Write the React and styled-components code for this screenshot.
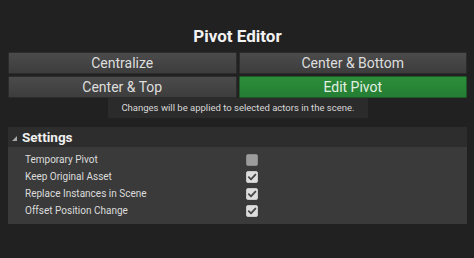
import React from "react";
import styled, { createGlobalStyle } from "styled-components";

const GlobalStyle = createGlobalStyle`
  html, body {
    margin: 0;
    padding: 0;
    background: #212121;
    font-family: Roboto, "Liberation Sans", sans-serif;
  }
`;

const options = [
  { label: "Temporary Pivot", checked: false },
  { label: "Keep Original Asset", checked: true },
  { label: "Replace Instances in Scene", checked: true },
  { label: "Offset Position Change", checked: true },
];

const App = () => {
  return (
    <>
      <GlobalStyle />
      <Page>
        <Title>Pivot Editor</Title>
        <ButtonGrid>
          <Button>Centralize</Button>
          <Button>Center &amp; Bottom</Button>
          <Button>Center &amp; Top</Button>
          <Button active>Edit Pivot</Button>
        </ButtonGrid>
        <Hint>Changes will be applied to selected actors in the scene.</Hint>
        <Panel>
          <PanelHeader>
            <Arrow width="5" height="5" viewBox="0 0 5 5">
              <polygon points="5,0 5,5 0,5" fill="#a8a8a8" />
            </Arrow>
            Settings
          </PanelHeader>
          <PanelBody>
            {options.map((opt) => (
              <Row key={opt.label}>
                <Label>{opt.label}</Label>
                <Check checked={opt.checked}>
                  {opt.checked && (
                    <svg width="10" height="10" viewBox="0 0 10 10">
                      <path
                        d="M1.8 5.2 L4 7.4 L8.4 2.6"
                        fill="none"
                        stroke="#4a4a4a"
                        strokeWidth="1.9"
                        strokeLinecap="round"
                        strokeLinejoin="round"
                      />
                    </svg>
                  )}
                </Check>
              </Row>
            ))}
          </PanelBody>
        </Panel>
      </Page>
    </>
  );
};

const Page = styled.div`
  width: 474px;
  height: 258px;
  padding: 26px 7px 0 8px;
  box-sizing: border-box;
  display: flex;
  flex-direction: column;
`;

const Title = styled.h1`
  margin: 0;
  height: 26px;
  line-height: 20px;
  text-align: center;
  font-size: 17px;
  font-weight: 700;
  color: #f2f2f2;
`;

const ButtonGrid = styled.div`
  display: grid;
  grid-template-columns: 1fr 1fr;
  grid-auto-rows: 22px;
  gap: 2px;
`;

const Button = styled.div`
  display: flex;
  align-items: center;
  justify-content: center;
  box-sizing: border-box;
  border: 1px solid ${(p) => (p.active ? "#1d5a27" : "#2c2c2c")};
  border-radius: 1px;
  background: ${(p) =>
    p.active
      ? "linear-gradient(#2c8e3b, #247d33)"
      : "linear-gradient(#4b4b4b, #3d3d3d)"};
  color: ${(p) => (p.active ? "#e2efe3" : "#dedede")};
  font-size: 14px;
`;

const Hint = styled.div`
  align-self: center;
  width: 260px;
  height: 20px;
  line-height: 20px;
  margin-left: 1px;
  background: #2b2b2b;
  color: #d8d8d8;
  font-size: 9.5px;
  text-align: center;
`;

const Panel = styled.div`
  margin-top: 9px;
  display: flex;
  flex-direction: column;
`;

const PanelHeader = styled.div`
  height: 20px;
  display: flex;
  align-items: center;
  gap: 5px;
  padding-left: 4px;
  background: #2d2d2d;
  color: #f0f0f0;
  font-size: 13.5px;
  font-weight: 700;
`;

const Arrow = styled.svg`
  margin-top: 3px;
`;

const PanelBody = styled.div`
  background: #3a3a3a;
  padding: 4px 0 5px 17px;
`;

const Row = styled.div`
  display: grid;
  grid-template-columns: 221px 12px;
  align-items: center;
  height: 17px;
`;

const Label = styled.span`
  color: #dcdcdc;
  font-size: 10px;
`;

const Check = styled.span`
  width: 12px;
  height: 12px;
  border-radius: 2px;
  box-sizing: border-box;
  display: flex;
  align-items: center;
  justify-content: center;
  background: ${(p) => (p.checked ? "#dedede" : "#9c9c9c")};
  border: 1px solid ${(p) => (p.checked ? "#c8c8c8" : "#8a8a8a")};
`;

export default App;
